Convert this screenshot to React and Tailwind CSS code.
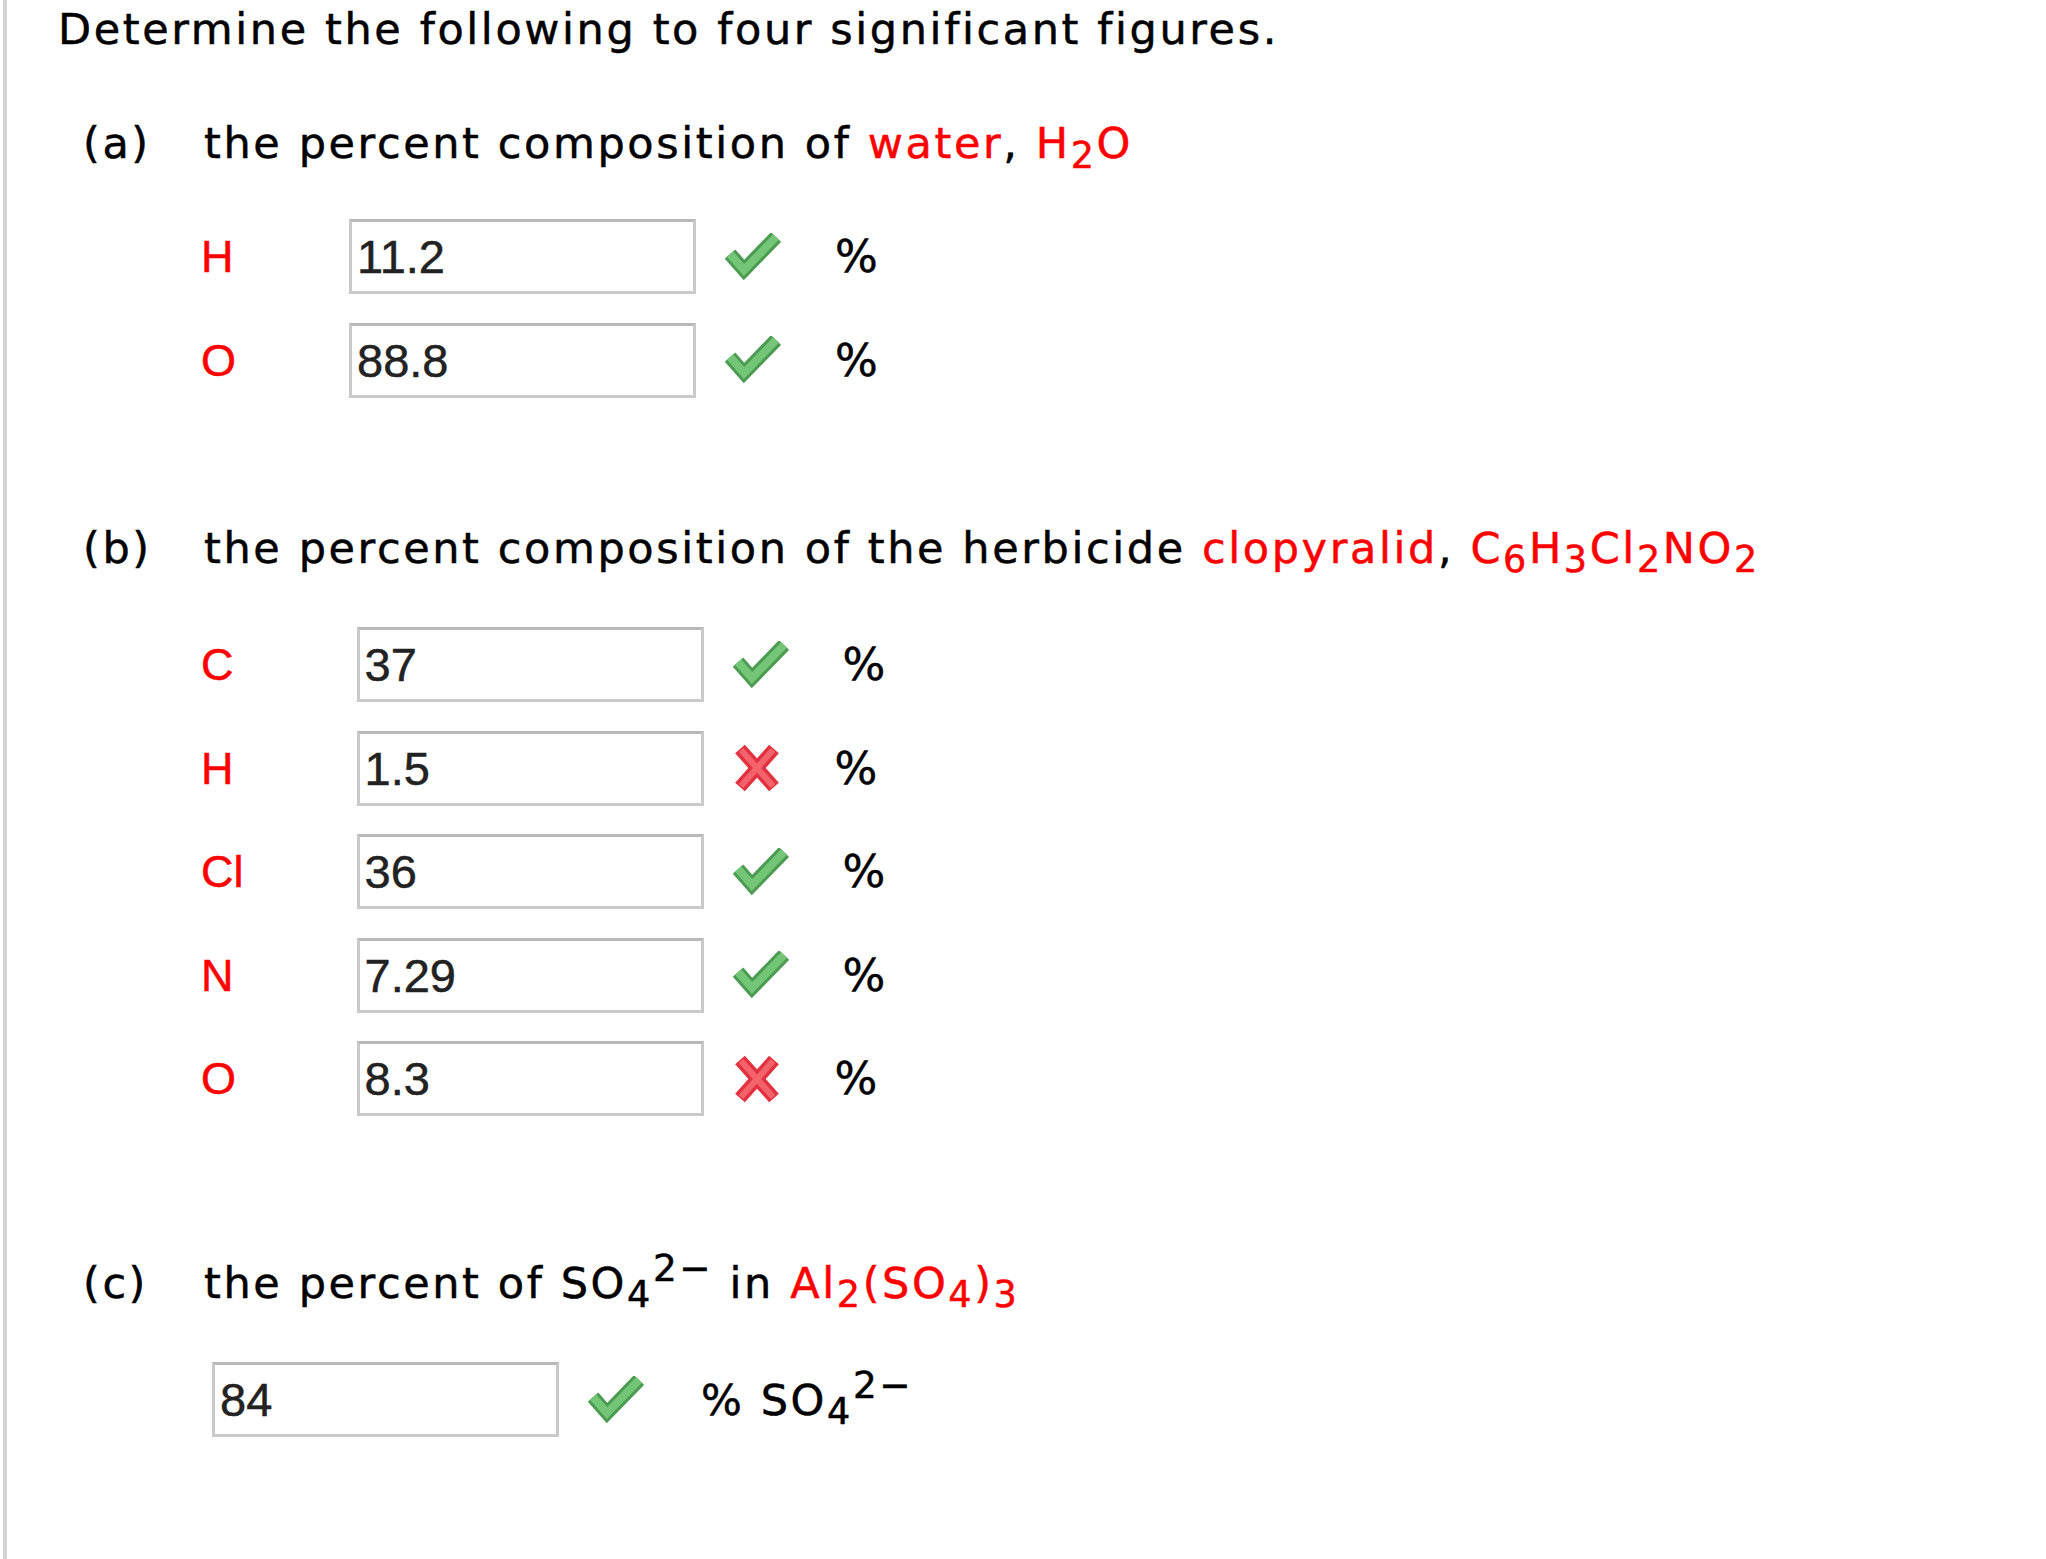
import React from 'react';

// --- Answer data ---
const waterRows = [
  { el: 'H', value: '11.2', ok: true },
  { el: 'O', value: '88.8', ok: true },
];

const clopyralidRows = [
  { el: 'C', value: '37', ok: true },
  { el: 'H', value: '1.5', ok: false },
  { el: 'Cl', value: '36', ok: true },
  { el: 'N', value: '7.29', ok: true },
  { el: 'O', value: '8.3', ok: false },
];

const Sub = ({ children }) => (
  <span className="relative top-[0.26em] text-[0.85em] leading-none">{children}</span>
);

const Sup = ({ children }) => (
  <span className="relative -top-[0.43em] text-[0.87em] leading-none">{children}</span>
);

const Red = ({ children }) => <span className="text-[#ff0000]">{children}</span>;

// --- Feedback icons ---
function Check() {
  return (
    <svg width="56" height="48" viewBox="0 0 56 48" className="shrink-0">
      <polyline points="5,21 19,37 51,4" fill="none" stroke="#4b9c51" strokeWidth="14" strokeLinejoin="miter" />
      <polyline points="5,21 19,37 51,4" fill="none" stroke="#74c578" strokeWidth="8" strokeLinejoin="miter" />
    </svg>
  );
}

function Cross() {
  return (
    <svg width="48" height="50" viewBox="0 0 48 50" className="shrink-0">
      <line x1="7" y1="6" x2="41" y2="44" stroke="#e2323f" strokeWidth="13" />
      <line x1="41" y1="6" x2="7" y2="44" stroke="#e2323f" strokeWidth="13" />
      <line x1="8" y1="7" x2="40" y2="43" stroke="#f4626c" strokeWidth="6" />
      <line x1="40" y1="7" x2="8" y2="43" stroke="#f4626c" strokeWidth="6" />
    </svg>
  );
}

function Answer({ value }) {
  return (
    <input
      readOnly
      value={value}
      className="h-[75px] w-[347px] border-[3px] border-[#cacaca] border-t-[#b9b9b9] bg-white pl-[5px] font-['Liberation_Sans',Arial,sans-serif] text-[47px] tracking-normal text-[#222] outline-none"
    />
  );
}

function Heading({ tag, className, children }) {
  return (
    <div className={`ml-[25px] flex ${className}`}>
      <span className="w-[121px] shrink-0">{tag}</span>
      <span>{children}</span>
    </div>
  );
}

function Composition({ rows, className }) {
  return (
    <div className={`ml-[143px] grid grid-cols-[auto_auto_auto] items-center justify-start gap-y-[28.5px] ${className}`}>
      {rows.map((r) => (
        <React.Fragment key={r.el}>
          <span className="pr-[113px] font-['Liberation_Sans',Arial,sans-serif] text-[45px] leading-none tracking-normal text-[#ff0000]">
            {r.el}
          </span>
          <Answer value={r.value} />
          <div className="flex items-center pl-[29px]">
            {r.ok ? <Check /> : <Cross />}
            <span className="ml-[54px] text-[45px] leading-none tracking-normal">%</span>
          </div>
        </React.Fragment>
      ))}
    </div>
  );
}

export default function App() {
  return (
    <div className="min-h-screen bg-white">
      <div className="ml-[3px] min-h-screen border-l-4 border-[#d2d2d2] pl-[51px] pt-[5px] font-['DejaVu_Sans',Verdana,sans-serif] text-[43px] leading-[48px] tracking-[2.6px] text-black [-webkit-text-stroke-width:0.5px]">
        <p>Determine the following to four significant figures.</p>

        {/* --- (a) water --- */}
        <Heading tag="(a)" className="mt-[66px]">
          the percent composition of <Red>water</Red>, <Red>H<Sub>2</Sub>O</Red>
        </Heading>
        <Composition rows={waterRows} className="mt-[52px]" />

        {/* --- (b) clopyralid --- */}
        <Heading tag="(b)" className="mt-[126px]">
          the percent composition of the herbicide <Red>clopyralid</Red>,{' '}
          <Red>
            C<Sub>6</Sub>H<Sub>3</Sub>Cl<Sub>2</Sub>NO<Sub>2</Sub>
          </Red>
        </Heading>
        <Composition rows={clopyralidRows} className="mt-[55.5px]" />

        {/* --- (c) sulfate --- */}
        <Heading tag="(c)" className="mt-[142.5px]">
          the percent of SO<Sub>4</Sub>
          <Sup>2−</Sup> in{' '}
          <Red>
            Al<Sub>2</Sub>(SO<Sub>4</Sub>)<Sub>3</Sub>
          </Red>
        </Heading>
        <div className="ml-[154px] mt-[55.5px] flex items-center">
          <Answer value="84" />
          <span className="ml-[29px]">
            <Check />
          </span>
          <span className="ml-[57px]">
            % SO<Sub>4</Sub>
            <Sup>2−</Sup>
          </span>
        </div>
      </div>
    </div>
  );
}
